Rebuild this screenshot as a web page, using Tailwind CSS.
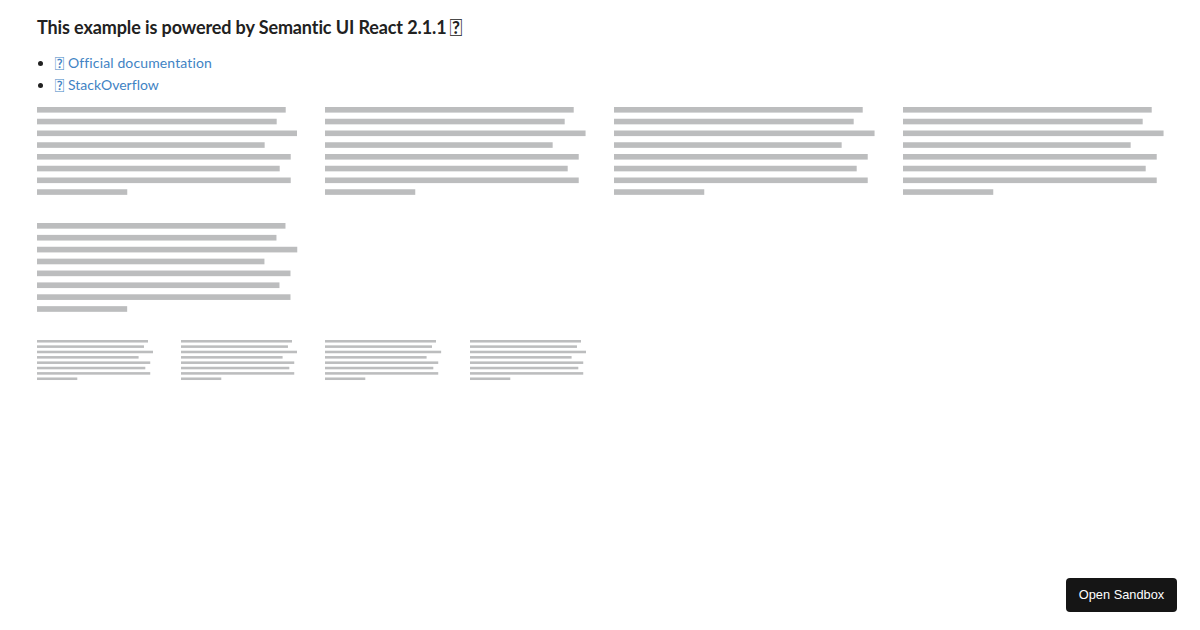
<!DOCTYPE html>
<html lang="en">
<head>
  <meta charset="UTF-8">
  <title>Semantic UI React example</title>
  <script src="https://cdn.jsdelivr.net/npm/@tailwindcss/browser@4"></script>
</head>
<body class="bg-white font-['Lato','Liberation_Sans',sans-serif] text-[14px] leading-[20px] text-[#212121] [font-variant-ligatures:none]">

  <svg class="hidden">
    <symbol id="paragraph" viewBox="0 0 260 90" preserveAspectRatio="none">
      <g fill="#bcbdbe">
        <rect x="0" y="0" width="248" height="5.6"></rect>
        <rect x="0" y="11.75" width="239" height="5.6"></rect>
        <rect x="0" y="23.5" width="260" height="5.6"></rect>
        <rect x="0" y="35.25" width="227" height="5.6"></rect>
        <rect x="0" y="47" width="253" height="5.6"></rect>
        <rect x="0" y="58.75" width="242" height="5.6"></rect>
        <rect x="0" y="70.5" width="253" height="5.6"></rect>
        <rect x="0" y="82.25" width="90" height="5.6"></rect>
      </g>
    </symbol>
  </svg>

  <div class="pt-[13px] pl-[37px] pr-[22px]">

    <h3 class="flex h-[28px] items-center text-[18px] font-bold tracking-[-0.11px]">
      This example is powered by Semantic UI React 2.1.1
      <span class="ml-[3px] inline-block w-[13px] text-center text-[24px] font-normal leading-none">&#xf059;</span>
    </h3>

    <ul class="mt-[11px] list-disc pl-[17px]">
      <li class="h-[22px] leading-[22px]"><a href="#" class="text-[#4183c4] tracking-[0.13px]"><span class="mr-[3px] inline-block w-[11px] text-center align-top text-[18px]">&#xf02d;</span>Official documentation</a></li>
      <li class="h-[22px] leading-[22px]"><a href="#" class="text-[#4183c4] tracking-[0.03px]"><span class="mr-[3px] inline-block w-[11px] text-center align-top text-[18px]">&#xf059;</span>StackOverflow</a></li>
    </ul>

    <div class="mt-[11px] -ml-[0.4px] grid w-[1127px] grid-cols-4 gap-x-[28px]">
      <svg class="h-[90px] w-full"><use href="#paragraph"></use></svg>
      <svg class="h-[90px] w-full"><use href="#paragraph"></use></svg>
      <svg class="h-[90px] w-full"><use href="#paragraph"></use></svg>
      <svg class="h-[90px] w-full"><use href="#paragraph"></use></svg>
    </div>

    <div class="mt-[26px]">
      <svg class="h-[91px] w-[260.5px]"><use href="#paragraph"></use></svg>
    </div>

    <div class="mt-[26px] -ml-[0.4px] grid w-[549.5px] grid-cols-4 gap-x-[28px]">
      <svg class="h-[41px] w-full"><use href="#paragraph"></use></svg>
      <svg class="h-[41px] w-full"><use href="#paragraph"></use></svg>
      <svg class="h-[41px] w-full"><use href="#paragraph"></use></svg>
      <svg class="h-[41px] w-full"><use href="#paragraph"></use></svg>
    </div>

  </div>

  <a href="#" class="fixed right-[23px] bottom-[18px] flex h-[34px] w-[111px] items-center justify-center rounded-[4px] bg-[#151515] font-['Liberation_Sans',sans-serif] text-[12.8px] text-white">Open Sandbox</a>

</body>
</html>
